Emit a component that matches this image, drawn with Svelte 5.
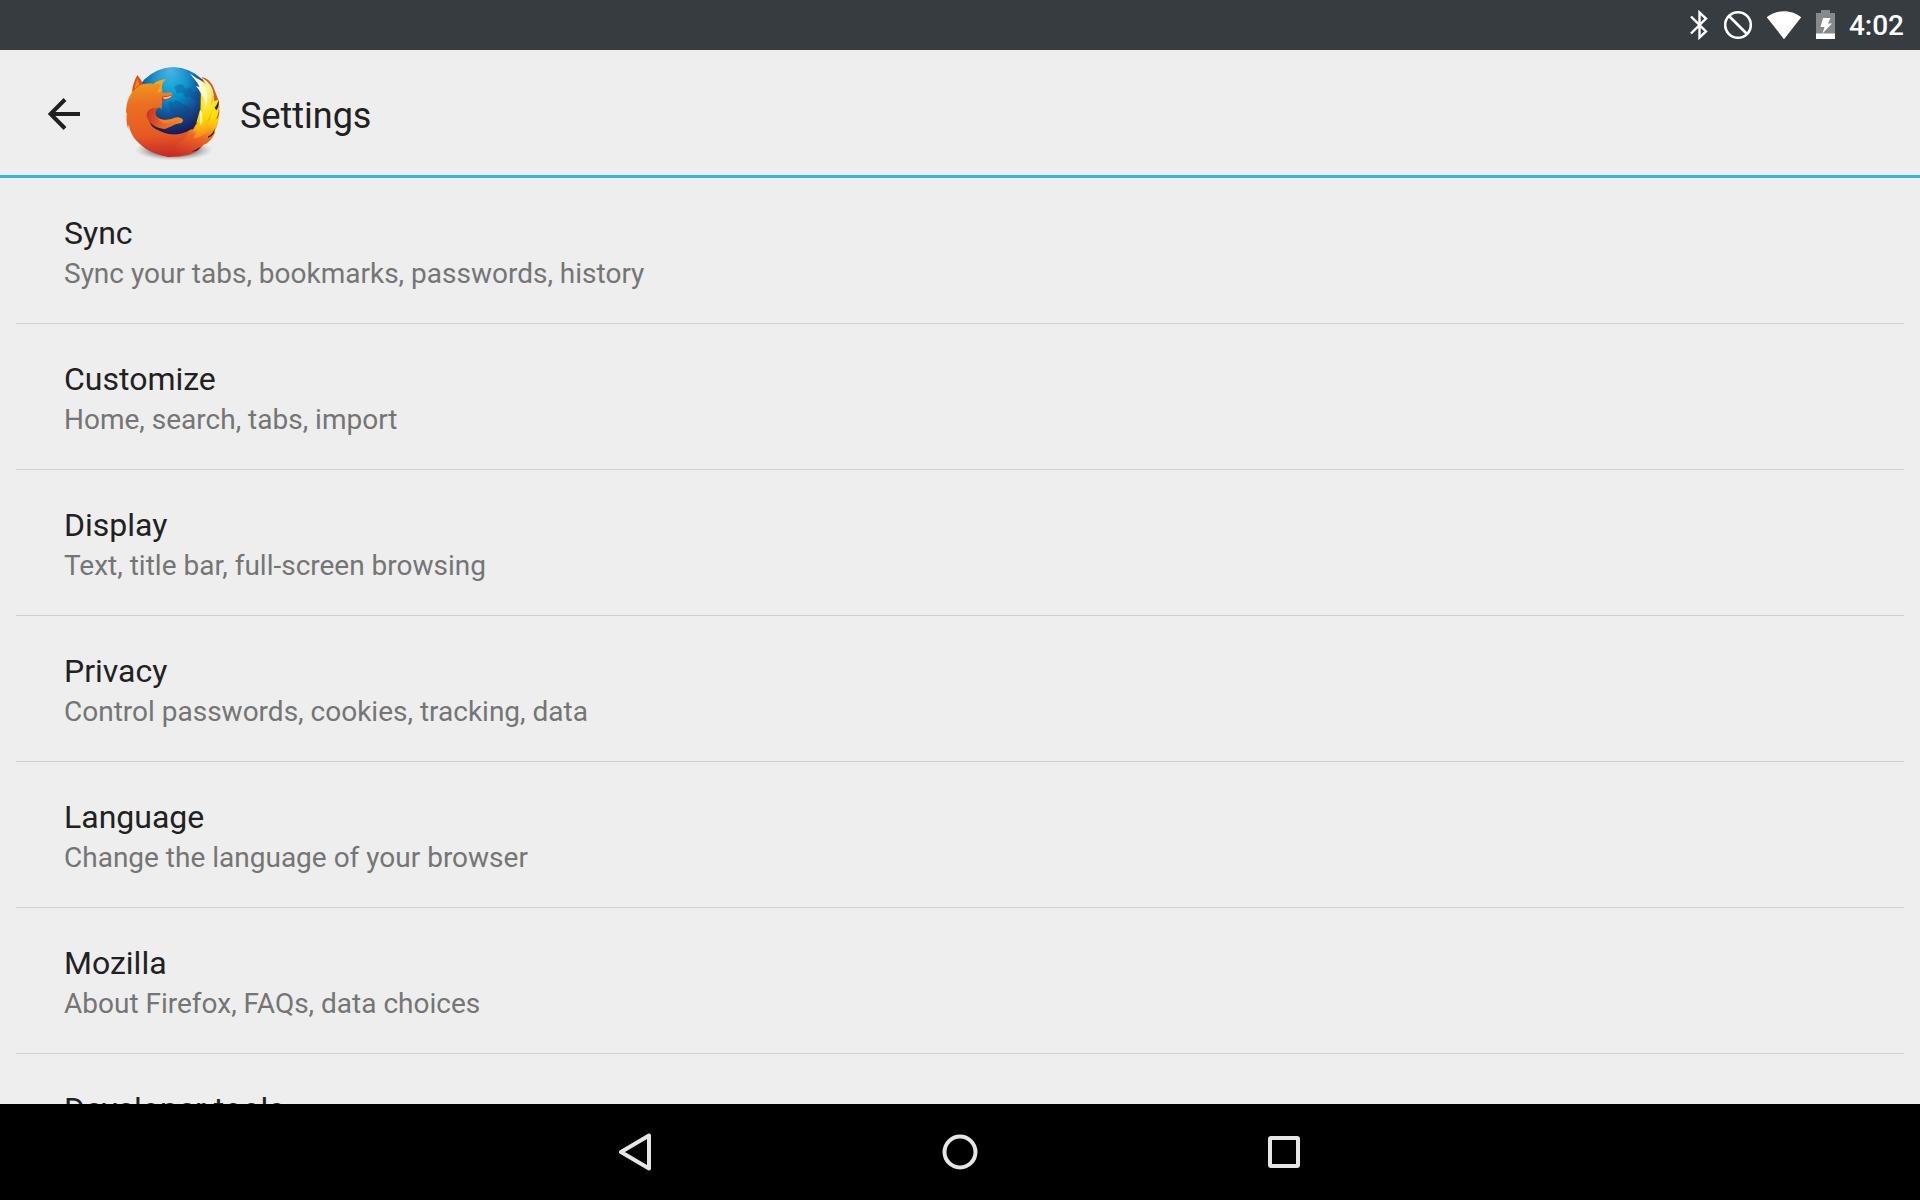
<script>
    export let time = "4:02";

    const settings = [
        { title: "Sync", summary: "Sync your tabs, bookmarks, passwords, history" },
        { title: "Customize", summary: "Home, search, tabs, import" },
        { title: "Display", summary: "Text, title bar, full-screen browsing" },
        { title: "Privacy", summary: "Control passwords, cookies, tracking, data" },
        { title: "Language", summary: "Change the language of your browser" },
        { title: "Mozilla", summary: "About Firefox, FAQs, data choices" },
        { title: "Developer tools", summary: "" },
    ];
</script>

<div class="screen">
    <!--STATUS BAR-->
    <div class="status">
        <svg width="20" height="32" viewBox="0 0 20 32" fill="none" stroke="#fff" stroke-width="2.4">
            <path d="M2 7.5 17 22.5 10.5 28.5V3.5L17 9.5 2 24.5"/>
        </svg>
        <svg width="30" height="30" viewBox="0 0 30 30" fill="none" stroke="#fff" stroke-width="2.6">
            <circle cx="15" cy="15" r="12.8"/>
            <path d="M6 6 24 24"/>
        </svg>
        <svg width="35" height="30" viewBox="1 0 35 30" fill="#fff">
            <path d="M.8 7.2C5.5 3.5 11.5 1.2 18 1.2S30.5 3.5 35.2 7.2L18 29.2Z"/>
        </svg>
        <svg width="19" height="30" viewBox="0 0 19 30">
            <path fill="#868a8c" d="M5 0h9v3h5v21H0V3h5z"/>
            <path fill="#fff" d="M0 23.500h19V29H0zM7 8h7.500l-2.500 5.500h4L6.500 23.500 8.500 17H4.500z"/>
        </svg>
        <span class="time">{time}</span>
    </div>

    <!--HEADER-->
    <header class="header">
        <button class="header_back" aria-label="Back">
            <svg width="32" height="32" viewBox="0 0 32 32" fill="none" stroke="#212121" stroke-width="4">
                <path d="M32 16H3M17 1.500 2.500 16 17 30.500"/>
            </svg>
        </button>
        <svg class="header_logo" width="96" height="96" viewBox="47 29 288 288">
            <defs>
                <radialGradient id="globe" gradientUnits="userSpaceOnUse" cx="180" cy="85" r="155">
                    <stop offset="0" stop-color="#00addf"/>
                    <stop offset=".3" stop-color="#0790cc"/>
                    <stop offset=".65" stop-color="#14498f"/>
                    <stop offset="1" stop-color="#191752"/>
                </radialGradient>
                <radialGradient id="shine" gradientUnits="userSpaceOnUse" cx="180" cy="45" r="85">
                    <stop offset="0" stop-color="#6fc0e8" stop-opacity=".7"/>
                    <stop offset="1" stop-color="#3a9bd6" stop-opacity="0"/>
                </radialGradient>
                <linearGradient id="fur" gradientUnits="userSpaceOnUse" x1="150" y1="75" x2="165" y2="305">
                    <stop offset="0" stop-color="#f09a1c"/>
                    <stop offset=".3" stop-color="#ea6f22"/>
                    <stop offset=".7" stop-color="#e85a22"/>
                    <stop offset="1" stop-color="#c42826"/>
                </linearGradient>
                <linearGradient id="body" gradientUnits="userSpaceOnUse" x1="265" y1="165" x2="225" y2="308">
                    <stop offset="0" stop-color="#ffe000"/>
                    <stop offset=".25" stop-color="#fbb615"/>
                    <stop offset=".5" stop-color="#ef6b22"/>
                    <stop offset="1" stop-color="#cb2a26"/>
                </linearGradient>
                <linearGradient id="flame" gradientUnits="userSpaceOnUse" x1="265" y1="80" x2="285" y2="240">
                    <stop offset="0" stop-color="#fff8b5"/>
                    <stop offset=".35" stop-color="#ffe957"/>
                    <stop offset=".7" stop-color="#ffdc00"/>
                    <stop offset="1" stop-color="#f68c1f"/>
                </linearGradient>
                <linearGradient id="arm" gradientUnits="userSpaceOnUse" x1="110" y1="175" x2="215" y2="200">
                    <stop offset="0" stop-color="#c73527"/>
                    <stop offset=".45" stop-color="#e95f24"/>
                    <stop offset="1" stop-color="#f58a1f"/>
                </linearGradient>
                <radialGradient id="ground">
                    <stop offset="0" stop-color="#222" stop-opacity=".8"/>
                    <stop offset=".6" stop-color="#444" stop-opacity=".5"/>
                    <stop offset="1" stop-color="#999" stop-opacity="0"/>
                </radialGradient>
            </defs>
            <ellipse cx="190" cy="284" rx="118" ry="32" fill="url(#ground)"/>
            <circle cx="189" cy="158" r="122" fill="url(#globe)"/>
            <circle cx="189" cy="158" r="122" fill="url(#shine)"/>
            <!--continents-->
            <g fill="#143d7d" opacity=".3">
                <path d="M192 94 205 87 217 88 226 100 240 97 251 111 261 108 273 122 265 139 247 132 238 124 226 127 217 113 199 114Z"/>
                <path d="M174 143 182 138 189 143 193 135 206 138 216 146 231 151 240 164 235 177 222 181 214 195 199 193 190 178 178 165Z"/>
            </g>
            <!--tail and lower body-->
            <path fill="#d4581f" d="M275 66C293 69 306 83 313 105L326 139 327 170 320 211 302 250 282 110Z"/>
            <path fill="url(#body)" d="M272 92C298 95 307 112 312 137L323 133C328 157 325 177 316 193L326 184C323 209 317 221 306 231L316 229C306 252 291 265 280 268 262 292 232 303 191 304L176 305 150 299C106 288 78 263 62 225L58 192 110 185 130 225C188 245 221 242 239 223L248 222 257 207 266 207 270 179Z"/>
            <path fill="url(#flame)" d="M238 53C255 70 276 73 290 92 283 82 279 74 275 67 297 80 309 95 311 126L307 119C316 142 312 157 303 169L309 165C320 190 301 207 294 221L299 217C286 238 270 246 249 249L262 223 249 232 262 199 257 207 269 163 275 176C278 156 276 144 273 130L282 142C276 121 269 106 257 91L268 96C262 80 250 69 238 53Z"/>
            <path fill="#fffbd6" d="M238 53C253 71 270 76 282 93 293 113 294 137 284 163 289 134 282 112 268 96 264 79 251 71 238 53ZM257 91C274 101 286 119 285 144 280 118 270 105 257 91ZM269 163C277 174 279 191 270 211Z"/>
            <path fill="#f7a51b" opacity=".7" d="M298 96C307 113 306 139 300 153L308 137C309 164 301 183 286 201L295 197C286 215 276 226 264 234 293 214 305 188 306 160 311 133 306 110 298 96Z"/>
            <!--head-->
            <path fill="url(#fur)" d="M81 60C88 68 95 76 96 87 108 84 119 84 130 86 139 77 150 74 166 72 155 81 153 92 155 104L158 113 180 111C187 113 187 119 184 126 177 132 164 131 156 138 154 145 156 153 153 163 150 156 148 155 143 158 121 156 108 168 110 183 112 205 130 222 154 229 181 242 210 239 236 226 230 242 221 254 204 263 194 283 183 294 176 305 152 302 118 288 92 267 71 252 61 235 57 215L54 208 54 222C47 201 48 186 50 171L47 175C47 150 52 130 64 112 66 91 72 75 81 60Z"/>
            <path fill="#d95122" d="M81 60C89 71 96 78 96 87 85 91 74 101 66 110 68 93 72 75 81 60Z"/>
            <path fill="#ef842b" d="M81 71 87 87 73 101C75 87 78 78 81 71Z"/>
            <path fill="#f2a71e" d="M130 86C140 77 150 74 166 72 155 82 153 93 155 105 151 111 146 113 140 112 146 102 148 92 151 85Z"/>
            <path fill="#ca3c24" d="M158 123C170 125 179 119 185 120 184 127 180 130 174 131 164 132 160 136 156 138 153 132 154 127 158 123Z"/>
            <path fill="#f6c6a4" d="M159 125C169 127 177 121 184 121 182 127 174 130 160 131Z"/>
            <!--arm-->
            <path fill="url(#arm)" d="M143 158C121 154 105 170 110 184 115 206 139 218 162 221 181 218 192 204 210 204 219 201 220 193 215 190 201 184 193 187 184 191 168 195 154 194 144 187 132 180 134 166 143 158Z"/>
            <path fill="#f28a26" opacity=".8" d="M142 188C158 197 175 195 189 189 200 185 210 187 216 192 207 198 192 195 181 201 166 207 151 204 142 188Z"/>
            <!--dark gaps in the tail-->
            <g fill="#202456">
                <path d="M293 243C304 239 309 230 313 220 313 233 306 243 293 247Z"/>
                <path d="M243 288C253 286 261 280 271 274 264 286 254 289 243 288Z"/>
                <path d="M313 157C320 149 323 142 324 135 327 150 323 159 318 165Z"/>
            </g>
        </svg>
        <h1>Settings</h1>
    </header>

    <!--SETTINGS LIST-->
    <main class="list">
        {#each settings as item}
            <button class="list_item">
                <span class="list_title">{item.title}</span>
                {#if item.summary.length !== 0}
                    <span class="list_summary">{item.summary}</span>
                {/if}
            </button>
        {/each}
    </main>

    <!--NAVIGATION BAR-->
    <nav class="nav">
        <button aria-label="Back">
            <svg width="34" height="40" viewBox="1 0 34 40">
                <path d="M3 20 31 3.500V36.500Z"/>
            </svg>
        </button>
        <button aria-label="Home">
            <svg width="36" height="36" viewBox="0 0 36 36">
                <circle cx="18" cy="18" r="15.500"/>
            </svg>
        </button>
        <button aria-label="Recent apps">
            <svg width="32" height="32" viewBox="0 0 32 32">
                <rect x="2" y="2" width="28" height="28" rx="1"/>
            </svg>
        </button>
    </nav>
</div>

<style>
    :global(body) {
        background-color: #eee;
    }
    .screen {
        display: flex;
        flex-direction: column;
        height: 100vh;
        overflow: hidden;
        background-color: #eee;
        color: #212121;
        font-family: Roboto, "Liberation Sans", sans-serif;
    }
    button {
        padding: 0;
        border: none;
        background: none;
        color: inherit;
        font-family: inherit;
        text-align: left;
        cursor: pointer;
    }
    svg {
        display: block;
        flex: none;
    }

    .status {
        flex: none;
        display: flex;
        align-items: center;
        justify-content: flex-end;
        gap: 14px;
        height: 50px;
        padding-right: 16px;
        background-color: #373c40;
        color: #fff;
    }
    .time {
        padding-top: 2px;
        font-size: 28px;
        line-height: 32px;
        font-weight: 500;
    }

    .header {
        flex: none;
        display: flex;
        align-items: center;
        height: 125px;
        border-bottom: 3px solid #33b5e5;
    }
    .header_back {
        padding: 2px 46px 0 48px;
    }
    .header_logo {
        overflow: visible;
    }
    .header h1 {
        margin: 0 0 0 18px;
        padding-top: 6px;
        font-size: 36px;
        line-height: 42px;
        font-weight: 400;
    }

    .list {
        flex: 1;
        min-height: 0;
        padding: 0 16px;
        overflow: hidden;
    }
    .list_item {
        display: flex;
        flex-direction: column;
        justify-content: flex-start;
        width: 100%;
        height: 146px;
        padding: 35px 48px 0;
        border-bottom: 1px solid #cfcfcf;
    }
    .list_title,
    .list_summary {
        line-height: 40px;
    }
    .list_title {
        font-size: 32px;
    }
    .list_summary {
        margin-top: 1px;
        color: #757575;
        font-size: 28px;
    }

    .nav {
        flex: none;
        display: flex;
        justify-content: center;
        height: 96px;
        background-color: #000;
    }
    .nav button {
        display: flex;
        align-items: center;
        justify-content: center;
        width: 324px;
    }
    .nav svg {
        fill: none;
        stroke: #e6e6e6;
        stroke-width: 4;
        stroke-linejoin: round;
    }
</style>
